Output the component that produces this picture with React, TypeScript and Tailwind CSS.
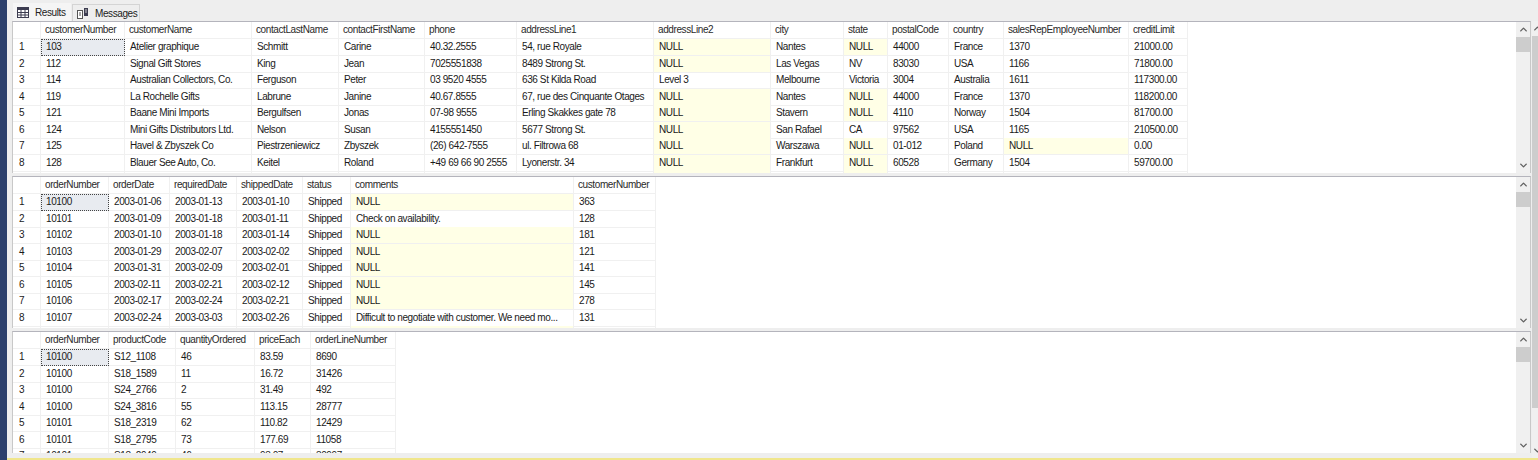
import { ChevronUp, ChevronDown } from 'lucide-react';

type Cell = string | null;

const customerHeaders = ['customerNumber', 'customerName', 'contactLastName', 'contactFirstName', 'phone', 'addressLine1', 'addressLine2', 'city', 'state', 'postalCode', 'country', 'salesRepEmployeeNumber', 'creditLimit'];
const customerRows: Cell[][] = [
  ['103', 'Atelier graphique', 'Schmitt', 'Carine', '40.32.2555', '54, rue Royale', null, 'Nantes', null, '44000', 'France', '1370', '21000.00'],
  ['112', 'Signal Gift Stores', 'King', 'Jean', '7025551838', '8489 Strong St.', null, 'Las Vegas', 'NV', '83030', 'USA', '1166', '71800.00'],
  ['114', 'Australian Collectors, Co.', 'Ferguson', 'Peter', '03 9520 4555', '636 St Kilda Road', 'Level 3', 'Melbourne', 'Victoria', '3004', 'Australia', '1611', '117300.00'],
  ['119', 'La Rochelle Gifts', 'Labrune', 'Janine', '40.67.8555', '67, rue des Cinquante Otages', null, 'Nantes', null, '44000', 'France', '1370', '118200.00'],
  ['121', 'Baane Mini Imports', 'Bergulfsen', 'Jonas', '07-98 9555', 'Erling Skakkes gate 78', null, 'Stavern', null, '4110', 'Norway', '1504', '81700.00'],
  ['124', 'Mini Gifts Distributors Ltd.', 'Nelson', 'Susan', '4155551450', '5677 Strong St.', null, 'San Rafael', 'CA', '97562', 'USA', '1165', '210500.00'],
  ['125', 'Havel & Zbyszek Co', 'Piestrzeniewicz', 'Zbyszek', '(26) 642-7555', 'ul. Filtrowa 68', null, 'Warszawa', null, '01-012', 'Poland', null, '0.00'],
  ['128', 'Blauer See Auto, Co.', 'Keitel', 'Roland', '+49 69 66 90 2555', 'Lyonerstr. 34', null, 'Frankfurt', null, '60528', 'Germany', '1504', '59700.00'],
  // row cut by the pane edge, only its top gridlines and fill show
  ['', '', '', '', '', '', null, '', null, '', '', '', ''],
];

const orderHeaders = ['orderNumber', 'orderDate', 'requiredDate', 'shippedDate', 'status', 'comments', 'customerNumber'];
const orderRows: Cell[][] = [
  ['10100', '2003-01-06', '2003-01-13', '2003-01-10', 'Shipped', null, '363'],
  ['10101', '2003-01-09', '2003-01-18', '2003-01-11', 'Shipped', 'Check on availability.', '128'],
  ['10102', '2003-01-10', '2003-01-18', '2003-01-14', 'Shipped', null, '181'],
  ['10103', '2003-01-29', '2003-02-07', '2003-02-02', 'Shipped', null, '121'],
  ['10104', '2003-01-31', '2003-02-09', '2003-02-01', 'Shipped', null, '141'],
  ['10105', '2003-02-11', '2003-02-21', '2003-02-12', 'Shipped', null, '145'],
  ['10106', '2003-02-17', '2003-02-24', '2003-02-21', 'Shipped', null, '278'],
  ['10107', '2003-02-24', '2003-03-03', '2003-02-26', 'Shipped', 'Difficult to negotiate with customer. We need mo...', '131'],
  ['', '', '', '', '', null, ''],
];

const detailHeaders = ['orderNumber', 'productCode', 'quantityOrdered', 'priceEach', 'orderLineNumber'];
const detailRows: Cell[][] = [
  ['10100', 'S12_1108', '46', '83.59', '8690'],
  ['10100', 'S18_1589', '11', '16.72', '31426'],
  ['10100', 'S24_2766', '2', '31.49', '492'],
  ['10100', 'S24_3816', '55', '113.15', '28777'],
  ['10101', 'S18_2319', '62', '110.82', '12429'],
  ['10101', 'S18_2795', '73', '177.69', '11058'],
  ['10101', 'S18_2949', '46', '93.07', '30997'],
];

function ResultGrid({ headers, rows, cols, width }: { headers: string[]; rows: Cell[][]; cols: string; width: string }) {
  return (
    <div className="flex-1 min-w-0 overflow-hidden">
      <div className={`grid ${cols} ${width} h-[17px] bg-white`}>
        <div className="border-r border-b border-[#f0f0f0]" />
        {headers.map((h, i) => (
          <div key={i} className="pl-1 leading-[16px] text-[#2a2a2a] whitespace-nowrap overflow-hidden border-r border-b border-[#f0f0f0]">
            {h}
          </div>
        ))}
      </div>
      {rows.map((row, r) => {
        const cutOff = row[0] === '';
        return (
          <div key={r} className={`grid ${cols} ${width} h-[16.5px]`}>
            <div className="pl-[6px] leading-[16px] text-[#1a1a1a] border-r border-b border-[#f0f0f0]">{cutOff ? '' : r + 1}</div>
            {row.map((cell, c) => {
              const selected = r === 0 && c === 0;
              return (
                <div
                  key={c}
                  className={`pl-[5px] leading-[16px] whitespace-nowrap overflow-hidden ${
                    selected
                      ? 'bg-[#e8ebf0] outline-1 -outline-offset-1 outline-dotted outline-[#444]'
                      : cell === null
                        ? 'bg-[#ffffe6] border-r border-b border-[#f0f0f0]'
                        : 'border-r border-b border-[#f0f0f0]'
                  } text-[#1a1a1a]`}
                >
                  {cutOff ? '' : cell === null ? 'NULL' : cell}
                </div>
              );
            })}
          </div>
        );
      })}
    </div>
  );
}

function PaneScrollbar() {
  return (
    <div className="w-[14px] shrink-0 bg-[#f0f0f0] flex flex-col items-center justify-between">
      <div className="w-full flex flex-col items-center">
        <div className="h-[15px] flex items-center">
          <ChevronUp size={11} strokeWidth={3} className="text-[#606060]" />
        </div>
        <div className="w-full h-[15px] bg-[#cdcdcd]" />
      </div>
      <div className="h-[15px] flex items-center">
        <ChevronDown size={11} strokeWidth={3} className="text-[#606060]" />
      </div>
    </div>
  );
}

function Pane({ height, children }: { height: string; children: React.ReactNode }) {
  return (
    <div className={`${height} flex bg-white border-t border-[#b4b4bc] border-l border-l-[#c8c8c8] border-r border-r-[#c8c8c8]`}>
      {children}
      <PaneScrollbar />
    </div>
  );
}

function TableIcon() {
  return (
    <svg width="12" height="11" viewBox="0 0 12 11" className="shrink-0">
      <rect x="0.5" y="0.5" width="11" height="10" fill="#fff" stroke="#3c3c50" />
      <rect x="0.5" y="0.5" width="11" height="2.5" fill="#3c3c50" />
      <path d="M4 3v7M8 3v7M1 5.5h10M1 8h10" stroke="#3c3c50" strokeWidth="1" fill="none" />
    </svg>
  );
}

function MessagesIcon() {
  return (
    <svg width="12" height="11" viewBox="0 0 12 11" className="shrink-0">
      <rect x="0.5" y="2.5" width="5" height="8" fill="#fff" stroke="#555" />
      <path d="M2 5h2M2 7h2" stroke="#555" fill="none" />
      <rect x="7" y="0" width="4" height="8" fill="#3c3c50" />
      <path d="M8 2h2M8 4h2" stroke="#ccc" fill="none" />
    </svg>
  );
}

export default function App() {
  return (
    <div className="w-[1538px] h-[460px] flex overflow-hidden bg-[#eeeeee] text-[10px] tracking-[-0.4px] font-['Liberation_Sans',Arial,sans-serif]">
      <div className="w-[7px] shrink-0 bg-[#2c3f6b]" />
      <div className="flex-1 min-w-0 flex flex-col">
        <div className="flex-1 min-h-0 flex">
          <div className="flex-1 min-w-0 pl-[5px] flex flex-col">
            {/* Tabs */}
            <div className="h-[21px] shrink-0 flex items-end pl-[1px]">
              <div className="h-[18px] w-[58px] flex items-center gap-[6px] pl-[4px] bg-[#f5f5f5] text-[#222]">
                <TableIcon />
                <span>Results</span>
              </div>
              <div className="h-[17px] w-[68px] ml-[1px] flex items-center gap-[6px] pl-[4px] pt-[1px] border border-b-0 border-[#d4d4d4] text-[#222]">
                <MessagesIcon />
                <span>Messages</span>
              </div>
            </div>

            <Pane height="h-[152px]">
              <ResultGrid
                headers={customerHeaders}
                rows={customerRows}
                cols="grid-cols-[28px_84px_127px_87px_86px_92px_137px_117px_73px_44px_61px_55px_125px_59px]"
                width="w-[1175px]"
              />
            </Pane>
            <div className="h-[3px] shrink-0" />
            <Pane height="h-[152px]">
              <ResultGrid
                headers={orderHeaders}
                rows={orderRows}
                cols="grid-cols-[28px_68px_61px_67px_66px_48px_223px_82px]"
                width="w-[643px]"
              />
            </Pane>
            <div className="h-[3px] shrink-0" />
            <Pane height="h-[122px]">
              <ResultGrid
                headers={detailHeaders}
                rows={detailRows}
                cols="grid-cols-[28px_68px_67px_79px_56px_85px]"
                width="w-[383px]"
              />
            </Pane>
          </div>

          {/* Outer scrollbar */}
          <div className="w-[6px] shrink-0 ml-[1px] mt-[21px] bg-[#f0f0f0] overflow-hidden flex flex-col justify-between">
            <div>
              <div className="h-[15px] flex items-center">
                <ChevronUp size={11} strokeWidth={3} className="text-[#606060] shrink-0" />
              </div>
              <div className="h-[372px] bg-[#cdcdcd]" />
            </div>
            <div className="h-[15px] flex items-center">
              <ChevronDown size={11} strokeWidth={3} className="text-[#606060] shrink-0" />
            </div>
          </div>
        </div>
        <div className="h-[2px] shrink-0 bg-[#f0e68c]" />
      </div>
    </div>
  );
}
